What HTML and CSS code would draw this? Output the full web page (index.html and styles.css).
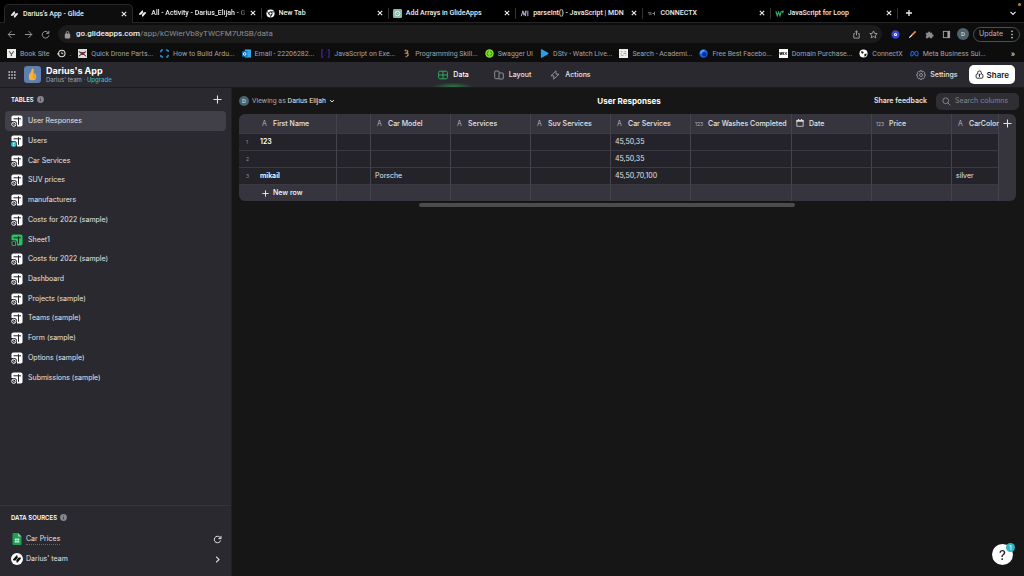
FILE: index.html
```html
<!DOCTYPE html>
<html lang="en">
<head>
	<meta charset="UTF-8">
	<meta name="viewport" content="width=device-width, initial-scale=1">
	<title>Darius's App - Glide</title>
	<link rel="stylesheet" href="styles.css">
</head>
<body>

<!-- shared icons -->
<svg class="defs" aria-hidden="true">
	<symbol id="bolt" viewBox="0 0 12 12"><path d="M5.6 1.6 1.4 6.3c-.5.6-.1 1.4.6 1.4h1.5c.5 0 .9-.2 1.2-.6L7 4.300l-.7-2.400c-.1-.4-.5-.5-.7-.3zM6.400 10.400l4.200-4.700c.5-.6.1-1.400-.6-1.400H8.500c-.5 0-.9.2-1.200.6L5 7.700l.7 2.400c.1.4.5.5.7.3z" fill="currentColor"/></symbol>
	<symbol id="close" viewBox="0 0 8 8"><path d="M1.800 1.800l4.400 4.400m0-4.400l-4.400 4.400" stroke="currentColor" stroke-width="1.100"/></symbol>
	<symbol id="plus" viewBox="0 0 10 10"><path d="M5 .5v9M.5 5h9" stroke="currentColor" stroke-width="1.200"/></symbol>
	<symbol id="globe" viewBox="0 0 10 10"><circle cx="5" cy="5" r="4.500" fill="#fff"/><path d="M2 2.500l2.500.3.8 1.700-2 .8zM6 5.500l2.500-.5-.5 2.500-2 1z" fill="#111"/></symbol>
	<symbol id="table" viewBox="0 0 12 12">
		<rect x=".5" y=".5" width="11" height="11" rx="1.800" fill="currentColor"/>
		<path d="M2.500 3.800h7.500M7.500 2.200v7.600" fill="none" stroke="#27262c" stroke-width="1"/>
	</symbol>
	<symbol id="row" viewBox="0 0 12 12">
		<use href="#table"/>
		<path d="M0 12V6h3a3 3 0 0 1 3 3v3z" fill="#27262c"/>
		<circle cx="2.800" cy="9.300" r="2.100" fill="none" stroke="#fff" stroke-width=".9"/>
		<path d="M1.400 7.900l2.800 2.800" stroke="#fff" stroke-width=".8"/>
	</symbol>
	<symbol id="row-user" viewBox="0 0 12 12">
		<use href="#table"/>
		<path d="M0 12V6h3a3 3 0 0 1 3 3v3z" fill="#27262c"/>
		<circle cx="2.700" cy="9.300" r="2.700" fill="#2fb5c4"/>
		<circle cx="2.700" cy="8.500" r=".9" fill="#b9f0f5"/><path d="M1.200 10.800c.3-1.500 2.700-1.500 3 0z" fill="#b9f0f5"/>
	</symbol>
	<symbol id="row-sheet" viewBox="0 0 12 12">
		<use href="#table"/>
		<path d="M0 12V6h3a3 3 0 0 1 3 3v3z" fill="#27262c"/>
		<rect x="1" y="7.200" width="3.600" height="4.400" rx=".6" fill="none" stroke="#23c55e" stroke-width=".9"/>
	</symbol>
	<symbol id="info" viewBox="0 0 8 8"><circle cx="4" cy="4" r="3.900" fill="#85848f"/><path d="M4 3.500v2.600M4 1.900v.9" stroke="#3a3940" stroke-width=".9"/></symbol>
	<symbol id="down" viewBox="0 0 8 8"><path d="M1.500 2.800L4 5.300l2.500-2.500" fill="none" stroke="currentColor" stroke-width="1.200"/></symbol>
</svg>

<!-- browser tabs -->
<div class="tabs">
	<div class="tab active"><svg class="fav"><use href="#bolt"/></svg><span>Darius's App - Glide</span><button aria-label="Close tab"><svg><use href="#close"/></svg></button></div>
	<div class="tab"><svg class="fav"><use href="#bolt"/></svg><span class="fade">All - Activity - Darius_Elijah - G</span><button aria-label="Close tab"><svg><use href="#close"/></svg></button></div>
	<div class="tab line"><svg class="fav" viewBox="0 0 10 10"><circle cx="5" cy="5" r="4.500" fill="#fff"/><circle cx="5" cy="5" r="1.800" fill="#fff" stroke="#000"/><path d="M5 3.200h4M3.500 6L1.500 2.600M6.500 6L4.600 9.300" stroke="#000" stroke-width=".9"/></svg><span>New Tab</span><button aria-label="Close tab"><svg><use href="#close"/></svg></button></div>
	<div class="tab line"><svg class="fav" viewBox="0 0 10 10"><rect width="10" height="10" rx="1.500" fill="#8bb9a8"/><circle cx="5" cy="5" r="2.600" fill="none" stroke="#d9eee6"/><path d="M3 3l4 4M5 2.400l2.300 1.300" stroke="#d9eee6" stroke-width=".7"/></svg><span>Add Arrays in GlideApps</span><button aria-label="Close tab"><svg><use href="#close"/></svg></button></div>
	<div class="tab line"><svg class="fav" viewBox="0 0 10 10"><path d="M1.500 8L3.200 2l1.300 5L6.700 2l-.6 6M8.700 2v6" fill="none" stroke="#b9b9e0" stroke-width="1.100"/></svg><span>parseInt() - JavaScript | MDN</span><button aria-label="Close tab"><svg><use href="#close"/></svg></button></div>
	<div class="tab line"><svg class="fav" viewBox="0 0 10 10"><path d="M1 4.200h4M2 5.800h3M6 5h2M8.300 3v4" stroke="#999" stroke-width=".9"/></svg><span>CONNECTX</span><button aria-label="Close tab"><svg><use href="#close"/></svg></button></div>
	<div class="tab line"><svg class="fav" viewBox="0 0 10 10"><path d="M1 2.500l1.500 5 1.500-4 1.500 4 1.500-5M7.300 2.500h2L8.200 4.500" fill="none" stroke="#33b36b" stroke-width="1.200"/></svg><span>JavaScript for Loop</span><button aria-label="Close tab"><svg><use href="#close"/></svg></button></div>
	<div class="tabs-end">
		<button aria-label="New tab"><svg viewBox="0 0 8 8"><path d="M4 1v6M1 4h6" stroke="currentColor" stroke-width="1.300"/></svg></button>
		<button aria-label="Search tabs"><svg><use href="#down"/></svg></button>
	</div>
	<i class="rec-dot"></i>
</div>

<!-- address bar -->
<div class="toolbar">
	<button aria-label="Back"><svg viewBox="0 0 10 10"><path d="M9 5H1.500M5 1.300L1.300 5 5 8.700"/></svg></button>
	<button aria-label="Forward"><svg viewBox="0 0 10 10"><path d="M1 5h7.500M5 1.300L8.700 5 5 8.700"/></svg></button>
	<button aria-label="Reload"><svg viewBox="0 0 10 10"><path d="M8.300 3.500A3.700 3.700 0 1 0 8.700 6M8.700 1v2.800H5.900"/></svg></button>
	<div class="url">
		<svg viewBox="0 0 10 10"><rect x="2.500" y="4.500" width="5" height="4.500" rx=".6" fill="#9a9a9c"/><path d="M3.600 4.500V3a1.400 1.400 0 0 1 2.800 0v1.500"/></svg>
		<p><b>go.glideapps.com</b>/app/kCWierVb8yTWCFM7UtSB/data</p>
		<button aria-label="Share page"><svg viewBox="0 0 10 10"><path d="M3.400 4H2v5h6V4H6.600M5 6V1M3.400 2.500L5 1l1.600 1.500"/></svg></button>
		<button aria-label="Bookmark"><svg viewBox="0 0 10 10"><path d="M5 1l1.200 2.700 2.900.3-2.200 1.900.7 2.900L5 7.300 2.400 8.800l.7-2.900L.9 4l2.900-.3z"/></svg></button>
	</div>
	<button aria-label="Password extension"><svg viewBox="0 0 10 10"><circle cx="5" cy="5" r="3.200" fill="#fff" stroke="#3b46d8" stroke-width="2.800"/><circle cx="5" cy="5" r=".6" fill="#3b46d8" stroke="none"/></svg></button>
	<button aria-label="Picker extension"><svg viewBox="0 0 10 10"><path d="M1.500 8.500l4-4" stroke="#fff" stroke-width="1.300"/><path d="M4.500 5.500L8.500 1.500" stroke="#e8843c" stroke-width="1.900"/></svg></button>
	<button aria-label="Extensions"><svg viewBox="0 0 10 10"><path d="M1 3h2.400a1.200 1.200 0 1 1 2.400 0H8v2.100a1.200 1.200 0 1 1 0 2.300V9.300H5.800a1.200 1.200 0 0 0-2.400 0H1V7a1.200 1.200 0 0 0 0-2.200z" fill="#8b8b8e" stroke="none"/></svg></button>
	<button aria-label="Side panel"><svg viewBox="0 0 10 10"><rect x="1.500" y="1.500" width="7" height="7"/><path d="M7.200 1.500v7" stroke-width="2.400"/></svg></button>
	<button class="avatar" aria-label="Profile">D</button>
	<button class="update">Update <svg viewBox="0 0 4 10"><circle cx="2" cy="1.500" r=".9"/><circle cx="2" cy="5" r=".9"/><circle cx="2" cy="8.500" r=".9"/></svg></button>
</div>

<!-- bookmarks -->
<nav class="bookmarks">
	<a href="#"><svg viewBox="0 0 10 10"><rect width="10" height="10" fill="#eee"/><path d="M2.500 2.500L5 6l2.300-3.500M4.800 6v2" fill="none" stroke="#333" stroke-width="1.100"/></svg>Book Site</a>
	<a href="#"><svg viewBox="0 0 10 10"><circle cx="5.300" cy="5" r="3.600" fill="none" stroke="#ddd" stroke-width="1.200"/><path d="M5.300 3v2.200H7M0 5.500h2.800" fill="none" stroke="#ddd"/></svg>.</a>
	<a href="#"><svg viewBox="0 0 10 10"><rect width="10" height="10" fill="#ddd"/><path d="M1 3l2.500 1h3L9 3M1 8l2.500-2h3L9 8" stroke="#111" fill="none"/><rect x="2.800" y="3.500" width="4.400" height="3.300" rx="1" fill="#8b2637"/></svg>Quick Drone Parts...</a>
	<a href="#"><svg viewBox="0 0 10 10"><path d="M1 3.500V1h2.500M6.500 1H9v2.500M9 6.500V9H6.500M3.500 9H1V6.500" fill="none" stroke="#2e8fd0" stroke-width="1.700" stroke-dasharray="2 .7"/></svg>How to Build Ardu...</a>
	<a href="#"><svg viewBox="0 0 10 10"><path d="M3 .5h7v9H3z" fill="#35a7e8"/><path d="M0 2.500h6v6H0z" fill="#0f6cbd"/><circle cx="3" cy="5.500" r="1.500" fill="none" stroke="#fff"/></svg>Email - 22206282...</a>
	<a href="#"><svg viewBox="0 0 10 10"><path d="M2.500 1H1v8h1.500M7.500 1H9v8H7.500M4 7V6M6 4V3" fill="none" stroke="#4b27a8" stroke-width="1.200"/></svg>JavaScript on Exe...</a>
	<a href="#"><svg viewBox="0 0 10 10"><path d="M3 1.500c4 0 4.500 2 2 3 3.500.5 2 3.500-1 4" fill="none" stroke="#d9a268" stroke-width="1.500" stroke-dasharray="1.800 .6"/></svg>Programming Skill...</a>
	<a href="#"><svg viewBox="0 0 10 10"><circle cx="5" cy="5" r="4.700" fill="#7be02c"/><path d="M4 2.500c-1.500 0-.5 2-1.700 2.500C3.500 5.500 2.500 7.500 4 7.500M6 2.500c1.500 0 .5 2 1.700 2.500C6.500 5.500 7.500 7.500 6 7.500" fill="none" stroke="#173647" stroke-width=".7"/></svg>Swagger UI</a>
	<a href="#"><svg viewBox="0 0 10 10"><path d="M1 .8Q1 0 2 .4L9 4.300q1 .7 0 1.400L2 9.600Q1 10 1 9.200z" fill="#2b9fe6"/></svg>DStv - Watch Live...</a>
	<a href="#"><svg viewBox="0 0 10 10"><rect width="10" height="10" fill="#eee"/><path d="M2 3h2m2 0h2M2 5h1m2 0h3M2 7h3m2 0h1" stroke="#999"/></svg>Search - Academi...</a>
	<a href="#"><svg viewBox="0 0 10 10"><circle cx="5" cy="5" r="4.700" fill="#1d5fe0"/><circle cx="6" cy="6" r="2.300" fill="#0b2f94"/><path d="M2 5a3 3 0 0 1 4-3" fill="none" stroke="#6fb4ff" stroke-width="1.400"/></svg>Free Best Facebo...</a>
	<a href="#"><svg viewBox="0 0 10 10"><rect width="10" height="10" fill="#fff"/><path d="M.8 3.500l.8 3 .8-3 .8 3 .8-3M5 3.500v3M6.300 3.500l2.500 3m0-3l-2.500 3" fill="none" stroke="#111" stroke-width=".9"/></svg>Domain Purchase...</a>
	<a href="#"><svg><use href="#globe"/></svg>ConnectX</a>
	<a href="#"><svg viewBox="0 0 10 10"><path d="M1 7C.5 4 2 2.300 3.200 2.800 4.800 3.500 5.500 7.700 7.500 7.700 9.500 7.700 9.500 2.500 7.200 2.500 5 2.500 4 7.700 2.300 7.700 1.500 7.700 1 7.500 1 7z" fill="none" stroke="#1f5fd6" stroke-width="1.300"/></svg>Meta Business Sui...</a>
	<button aria-label="More bookmarks">»</button>
</nav>

<!-- app header -->
<header>
	<div class="brand">
		<button class="apps" aria-label="All apps"><svg viewBox="0 0 8 8"><path d="M.5 1h1.400m1.400 0h1.400m1.400 0h1.400M.5 4h1.400m1.400 0h1.400m1.400 0h1.400M.5 7h1.400m1.400 0h1.400m1.400 0h1.400" stroke="#ddd" stroke-width="1.400"/></svg></button>
		<svg class="logo" viewBox="0 0 18 18"><rect width="18" height="18" rx="3.500" fill="#5d80b0"/><path d="M8.300 3c1-.8 2 0 1.900 1.500L10 7.300c1.600.1 2.900.9 2.900 2.500v2.700c0 1.600-1.300 2.500-3 2.500H7.500C6 15 5.200 14 5.200 12.600V9.800c0-1 .6-1.700 1.400-2.300C7.800 6.500 7.700 4.500 8.300 3z" fill="#f9b233"/><path d="M9.500 8.800h3M9.500 10.600h3.200M9.500 12.500h3" stroke="#e07f1e" stroke-width=".7"/></svg>
		<div>
			<h1>Darius's App</h1>
			<p>Darius' team · <a href="#">Upgrade</a></p>
		</div>
	</div>
	<nav class="views">
		<a href="#" class="on"><svg viewBox="0 0 10 10"><rect x=".6" y="1.200" width="8.800" height="7.600" rx="1.300"/><path d="M.6 5h8.800M5 1.200v7.600"/></svg>Data</a>
		<a href="#"><svg viewBox="0 0 10 10"><path d="M5 8.700H1.700a1 1 0 0 1-1-1V2a1 1 0 0 1 1-1H4a1 1 0 0 1 1 1v1"/><rect x="5" y="3" width="4.300" height="6" rx=".8"/></svg>Layout</a>
		<a href="#"><svg viewBox="0 0 10 10"><path d="M6 .8L.9 5.800h3L3.700 9.200 9.100 4.200H6z"/></svg>Actions</a>
	</nav>
	<div class="right">
		<button class="settings"><svg viewBox="0 0 10 10"><path d="M4.200.7h1.600l.4 1.300 1.300-.5 1.100 1.200-.5 1.200 1.200.5v1.400l-1.200.5.5 1.200-1.100 1.200-1.300-.5-.4 1.200H4.200l-.4-1.200-1.300.5-1.100-1.200.5-1.200L.7 5.800V4.400l1.200-.5-.5-1.200 1.100-1.200 1.300.5z"/><circle cx="5" cy="5" r="1.500"/></svg>Settings</button>
		<button class="share"><svg viewBox="0 0 10 10"><path d="M3 4.500H2.500A1.300 1.300 0 0 0 1.200 5.800v2a1.300 1.300 0 0 0 1.300 1.300h5a1.300 1.300 0 0 0 1.300-1.300v-2a1.300 1.300 0 0 0-1.300-1.300H7V3a2 2 0 0 0-4 0zM5 7.700V4.500M3.900 5.600L5 4.500l1.100 1.100"/></svg>Share</button>
	</div>
</header>

<div class="app">
	<aside>
		<div class="side-title">
			<h2>TABLES</h2><svg><use href="#info"/></svg>
			<button aria-label="Add table"><svg><use href="#plus"/></svg></button>
		</div>
		<ul class="tables">
			<li><a href="#" class="selected"><svg><use href="#row"/></svg>User Responses</a></li>
			<li><a href="#"><svg><use href="#row-user"/></svg>Users</a></li>
			<li><a href="#"><svg><use href="#row"/></svg>Car Services</a></li>
			<li><a href="#"><svg><use href="#row"/></svg>SUV prices</a></li>
			<li><a href="#"><svg><use href="#row"/></svg>manufacturers</a></li>
			<li><a href="#"><svg><use href="#row"/></svg>Costs for 2022 (sample)</a></li>
			<li><a href="#"><svg class="green"><use href="#row-sheet"/></svg>Sheet1</a></li>
			<li><a href="#"><svg><use href="#row"/></svg>Costs for 2022 (sample)</a></li>
			<li><a href="#"><svg><use href="#row"/></svg>Dashboard</a></li>
			<li><a href="#"><svg><use href="#row"/></svg>Projects (sample)</a></li>
			<li><a href="#"><svg><use href="#row"/></svg>Teams (sample)</a></li>
			<li><a href="#"><svg><use href="#row"/></svg>Form (sample)</a></li>
			<li><a href="#"><svg><use href="#row"/></svg>Options (sample)</a></li>
			<li><a href="#"><svg><use href="#row"/></svg>Submissions (sample)</a></li>
		</ul>
		<section class="sources">
			<div class="side-title"><h2>DATA SOURCES</h2><svg><use href="#info"/></svg></div>
			<div class="source">
				<svg viewBox="0 0 12 12"><path d="M2.500 0h4.500L10.500 3.500V11a1 1 0 0 1-1 1h-7a1 1 0 0 1-1-1V1a1 1 0 0 1 1-1z" fill="#1f9d57"/><path d="M7 0v3.500h3.500z" fill="#8ed1ac"/><path d="M3.800 5.500h4.400v4H3.800z" fill="#d8f2e2"/><path d="M3.800 7.500h4.400M6 5.500v4" stroke="#1f9d57" stroke-width=".5"/></svg>
				<a href="#" class="dotted">Car Prices</a>
				<button aria-label="Reload source"><svg viewBox="0 0 10 10"><path d="M8.500 6A3.600 3.600 0 1 1 7.700 2.600L8.700 3.800M8.900 1v3H6" fill="none" stroke="currentColor" stroke-width="1.100"/></svg></button>
			</div>
			<div class="source">
				<svg viewBox="0 0 12 12"><circle cx="6" cy="6" r="6" fill="#fff"/><use href="#bolt" x="1" y="1" width="10" height="10" color="#111"/></svg>
				<a href="#">Darius' team</a>
				<button aria-label="Open team"><svg viewBox="0 0 10 10"><path d="M3.500 1.800L6.700 5 3.500 8.200" fill="none" stroke="currentColor" stroke-width="1.200"/></svg></button>
			</div>
		</section>
	</aside>

	<main>
		<div class="top">
			<button class="viewing"><span class="avatar">D</span><span>Viewing as <b>Darius Elijah</b></span><svg><use href="#down"/></svg></button>
			<h2>User Responses</h2>
			<div class="tools">
				<a href="#">Share feedback</a>
				<label class="search"><svg viewBox="0 0 10 10"><circle cx="4.200" cy="4.200" r="3.200"/><path d="M6.600 6.600L9.300 9.300"/></svg><input type="text" placeholder="Search columns" aria-label="Search columns"></label>
			</div>
		</div>

		<div class="grid">
			<table>
				<colgroup><col class="num"><col class="first"><col class="narrow"><col><col><col><col><col class="wide"><col><col><col class="rest"></colgroup>
				<thead>
					<tr>
						<th></th>
						<th><i>A</i>First Name</th>
						<th></th>
						<th><i>A</i>Car Model</th>
						<th><i>A</i>Services</th>
						<th><i>A</i>Suv Services</th>
						<th><i>A</i>Car Services</th>
						<th class="number"><i>123</i>Car Washes Completed</th>
						<th class="number"><svg viewBox="0 0 8 8"><path d="M.8 1.300h6.400v6H.8z" fill="none" stroke="#ddd" stroke-width=".8"/><path d="M.5 1h7v1.800h-7zM2 0h1v1H2zM5 0h1v1H5z" fill="#ddd"/></svg>Date</th>
						<th class="number"><i>123</i>Price</th>
						<th><i>A</i>CarColor</th>
					</tr>
				</thead>
				<tbody>
					<tr><td>1</td><td>123</td><td></td><td></td><td></td><td></td><td>45,50,35</td><td></td><td></td><td></td><td></td></tr>
					<tr><td>2</td><td></td><td></td><td></td><td></td><td></td><td>45,50,35</td><td></td><td></td><td></td><td></td></tr>
					<tr><td>3</td><td>mikail</td><td></td><td>Porsche</td><td></td><td></td><td>45,50,70,100</td><td></td><td></td><td></td><td>silver</td></tr>
				</tbody>
				<tfoot>
					<tr><td></td><td><button><svg><use href="#plus"/></svg>New row</button></td><td></td><td></td><td></td><td></td><td></td><td></td><td></td><td></td><td></td></tr>
				</tfoot>
			</table>
			<button class="add-col" aria-label="Add column"><svg><use href="#plus"/></svg></button>
		</div>
		<div class="scroll"><div class="thumb"></div></div>
	</main>
</div>

<button class="help" aria-label="Help">?<span>1</span></button>

</body>
</html>
```
FILE: styles.css
```css
* { box-sizing: border-box; }

body {
	margin: 0;
	min-height: 100vh;
	display: flex;
	flex-direction: column;
	background: #161616;
	color: #e4e4e8;
	font: 7px/10px Inter, "Liberation Sans", sans-serif;
}

h1, h2, p, ul { margin: 0; padding: 0; }
ul { list-style: none; }
a { color: inherit; text-decoration: none; }
button {
	padding: 0;
	border: 0;
	background: none;
	color: inherit;
	font: inherit;
	display: flex;
	align-items: center;
}
svg { width: 8px; height: 8px; flex: none; display: block; }
.defs { position: absolute; width: 0; height: 0; }

.tabs, .toolbar, .bookmarks { font-family: Roboto, "Liberation Sans", sans-serif; }

/* browser tabs */
.tabs {
	position: relative;
	display: flex;
	align-items: flex-end;
	height: 23px;
	padding-left: 4px;
	background: #000;
	border-bottom: 1px solid #252527;
	color: #eee;
	font-weight: 500;
}
.tab {
	flex: 1;
	min-width: 0;
	height: 18px;
	display: flex;
	align-items: center;
	gap: 4px;
	padding: 0 4px 0 5px;
	white-space: nowrap;
}
.tab .fav { width: 9px; height: 9px; }
.tab span { flex: 1; overflow: hidden; }
.tab .fade {
	margin-right: -4px;
	-webkit-mask-image: linear-gradient(to right, #000 85%, transparent);
	mask-image: linear-gradient(to right, #000 85%, transparent);
}
.tab.active {
	height: 19px;
	margin-bottom: -1px;
	background: #0d0d0e;
	border: 1px solid #29292b;
	border-bottom: 0;
	border-radius: 5px 5px 0 0;
}
.tab.line { background: linear-gradient(#333, #333) left center / 1px 11px no-repeat; }
.tabs-end {
	width: 127px;
	height: 18px;
	padding: 0 7px 0 8px;
	display: flex;
	justify-content: space-between;
	align-items: center;
	background: linear-gradient(#333, #333) left center / 1px 11px no-repeat;
}
.rec-dot {
	position: absolute;
	top: 3px;
	right: 3px;
	width: 3px;
	height: 3px;
	border-radius: 50%;
	background: #c9822c;
}

/* address bar */
.toolbar {
	display: flex;
	align-items: center;
	gap: 8px;
	height: 22px;
	padding: 0 4px 0 7px;
	background: #0d0d0e;
	color: #b5b5b8;
}
.toolbar svg { width: 9px; height: 9px; fill: none; stroke: #a5a5a8; }
.toolbar .avatar { margin-left: -2px; }
.url {
	flex: 1;
	display: flex;
	align-items: center;
	gap: 8px;
	height: 18px;
	margin-right: 1px;
	padding: 0 4px 0 5px;
	border-radius: 9px;
	background: #1b1b1c;
	color: #8e8e91;
	font-size: 8px;
}
.url p { flex: 1; margin-left: -4px; }
.url b { color: #f2f2f2; font-weight: 500; }
.avatar {
	width: 12px;
	height: 12px;
	border-radius: 50%;
	display: flex;
	align-items: center;
	justify-content: center;
	background: #4c626c;
	color: #dfe8ec;
	font-size: 6px;
}
.update {
	height: 15px;
	padding: 0 5px;
	gap: 7px;
	margin-left: -4px;
	border: 1px solid #3c5a46;
	border-radius: 8px;
	font-family: Inter, sans-serif;
}
.update svg { width: 4px; fill: #ddd; stroke: none; }

/* bookmarks */
.bookmarks {
	display: flex;
	align-items: center;
	gap: 7px;
	height: 17px;
	padding: 0 9px 0 7px;
	background: #0d0d0e;
	color: #a2a2a5;
	white-space: nowrap;
}
.bookmarks a { display: flex; align-items: center; gap: 4px; }
.bookmarks svg { width: 9px; height: 9px; }
.bookmarks button { margin-left: auto; font-size: 9px; color: #eee; }

/* app header */
header {
	display: grid;
	grid-template-columns: 1fr auto 1fr;
	align-items: center;
	height: 26px;
	padding: 0 9px 0 8px;
	background: #2a292f;
	border-bottom: 1px solid #1c1b20;
}
.brand { display: flex; align-items: center; gap: 8px; }
.brand .logo { width: 17px; height: 17px; }
.brand > div { margin-left: -3px; }
h1 { font-size: 9px; line-height: 10px; font-weight: 700; color: #fff; }
.brand p { font-size: 6px; line-height: 8px; color: #a5a4ad; }
.brand p a { color: #38b3c8; font-weight: 500; }
.views { display: flex; align-self: stretch; gap: 5px; margin-left: 6px; font-weight: 500; }
.views a {
	display: flex;
	align-items: center;
	gap: 5px;
	padding: 0 7px;
}
.views svg, .settings svg, .share svg {
	width: 10px;
	height: 10px;
	fill: none;
	stroke: #aaa9b2;
	stroke-width: .8;
}
.views .on {
	background: radial-gradient(ellipse at 50% 100%, #2b7a4b, transparent 65%) bottom / 100% 5px no-repeat;
	margin-right: 6px;
	color: #fff;
}
.views .on svg { stroke: #2fc46b; }
.right { display: flex; justify-content: flex-end; gap: 11px; font-weight: 500; }
.settings { gap: 4px; }
.share {
	height: 19px;
	padding: 0 6px;
	gap: 3px;
	border-radius: 5px;
	background: #fff;
	color: #1a1a1d;
	font-size: 8px;
	font-weight: 600;
}
.share svg { width: 9px; height: 9px; stroke: #1a1a1d; stroke-width: 1; }

/* sidebar */
.app { flex: 1; display: flex; }
aside {
	width: 232px;
	display: flex;
	flex-direction: column;
	background: #2a292f;
	border-right: 1px solid #202024;
}
.side-title { display: flex; align-items: center; gap: 3px; height: 23px; padding: 0 9px 0 11px; }
.side-title h2 { font-size: 6px; font-weight: 600; color: #fff; }
.side-title svg { width: 7px; height: 7px; }
.side-title button { margin-left: auto; }
.side-title button svg { width: 9px; height: 9px; }
.tables {
	display: grid;
	grid-auto-rows: 1fr;
	height: 276px;
	padding: 0 5px;
}
.tables a {
	display: flex;
	align-items: center;
	gap: 5px;
	height: 100%;
	padding: 1px 0 0 6px;
	border-radius: 4px;
}
.tables svg, .source > svg { width: 12px; height: 12px; color: #fff; }
.tables .green { color: #23c55e; }
.tables .selected { background: #414048; }
.sources { margin-top: auto; padding-bottom: 7px; border-top: 1px solid #36353b; }
.source { display: flex; align-items: center; gap: 3px; height: 20px; padding: 0 9px 0 11px; }
.source button { margin-left: auto; }
.source button svg { width: 9px; height: 9px; }
.dotted { border-bottom: 1px dotted #66656e; }

/* main area */
main { flex: 1; min-width: 0; padding-left: 7px; }
.top {
	display: grid;
	grid-template-columns: 1fr auto 1fr;
	align-items: center;
	height: 26px;
	padding-right: 5px;
}
.top h2 { font-size: 8px; font-weight: 700; color: #fff; }
.viewing { gap: 3px; color: #a8a7af; font-family: Roboto, sans-serif; }
.viewing b { color: #e4e4e8; font-weight: 400; }
.viewing .avatar { width: 10px; height: 10px; }
.viewing svg { width: 6px; height: 6px; color: #fff; }
.tools { display: flex; justify-content: flex-end; align-items: center; gap: 9px; font-weight: 600; }
.search {
	display: flex;
	align-items: center;
	gap: 4px;
	width: 83px;
	height: 17px;
	padding: 0 6px;
	border-radius: 5px;
	background: #2f2e35;
}
.search svg { width: 9px; height: 9px; fill: none; stroke: #8a8992; }
.search input {
	width: 100%;
	min-width: 0;
	padding: 0;
	border: 0;
	outline: 0;
	background: none;
	color: #e4e4e8;
	font: inherit;
	font-weight: 400;
}
.search input::placeholder { color: #85848d; }

/* data grid */
.grid {
	display: flex;
	margin-right: 8px;
	border-radius: 6px;
	overflow: hidden;
	background: #36353e;
}
table { flex: 1; width: 0; table-layout: fixed; border-collapse: separate; border-spacing: 0; }
col { width: 80px; }
.num { width: 17px; }
.first { width: 81px; }
.narrow { width: 34px; }
.wide { width: 101px; }
.rest { width: auto; }
th, td {
	padding: 0 0 0 4px;
	border-right: 1px solid #45444c;
	border-bottom: 1px solid #3b3a42;
	text-align: left;
	white-space: nowrap;
}
th:first-child, td:first-child { border-right: 0; color: #8f8e97; font-size: 5px; padding-left: 7px; }
td:nth-child(2) { font-weight: 600; color: #fff; }
th { height: 20px; padding-left: 6px; font-weight: 500; }
th i {
	display: inline-block;
	width: 11px;
	color: #b5b4bd;
	font-style: normal;
	font-weight: 400;
}
th svg { display: inline-block; margin-right: 5px; vertical-align: -1px; }
th.number { padding-left: 4px; }
th.number i { width: 13px; font-size: 5px; }
tbody td { height: 17px; background: #24232a; }
tfoot td { height: 16px; border-bottom: 0; }
tfoot button { gap: 4px; margin-left: 2px; font-weight: 500; }
tfoot button svg { width: 7px; height: 7px; }
.add-col { align-self: flex-start; width: 17px; height: 19px; justify-content: center; }
.add-col svg { width: 9px; height: 9px; }
.scroll { margin: 2px 8px 0 0; padding-left: 180px; }
.thumb { width: 63%; height: 4px; border-radius: 2px; background: #4c4c4e; }

.help {
	position: fixed;
	right: 11px;
	bottom: 11px;
	width: 21px;
	height: 21px;
	justify-content: center;
	border-radius: 50%;
	background: #fff;
	color: #222;
	font-size: 13px;
	font-weight: 500;
}
.help span {
	position: absolute;
	top: -1px;
	right: -2px;
	width: 9px;
	height: 9px;
	border-radius: 50%;
	background: #2fb5c4;
	color: #fff;
	font-size: 6px;
	line-height: 9px;
	text-align: center;
}
```
